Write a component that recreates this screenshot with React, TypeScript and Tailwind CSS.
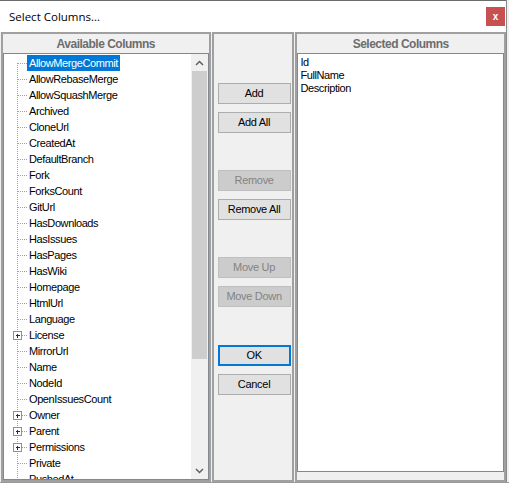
import React from "react"

const available = [
  { name: "AllowMergeCommit" },
  { name: "AllowRebaseMerge" },
  { name: "AllowSquashMerge" },
  { name: "Archived" },
  { name: "CloneUrl" },
  { name: "CreatedAt" },
  { name: "DefaultBranch" },
  { name: "Fork" },
  { name: "ForksCount" },
  { name: "GitUrl" },
  { name: "HasDownloads" },
  { name: "HasIssues" },
  { name: "HasPages" },
  { name: "HasWiki" },
  { name: "Homepage" },
  { name: "HtmlUrl" },
  { name: "Language" },
  { name: "License", expandable: true },
  { name: "MirrorUrl" },
  { name: "Name" },
  { name: "NodeId" },
  { name: "OpenIssuesCount" },
  { name: "Owner", expandable: true },
  { name: "Parent", expandable: true },
  { name: "Permissions", expandable: true },
  { name: "Private" },
  { name: "PushedAt" },
]

const selected = ["Id", "FullName", "Description"]

const font = { fontFamily: '"Liberation Sans", Arial, sans-serif' }

function TreeGutter({ first, expandable }: { first: boolean; expandable?: boolean }) {
  return (
    <svg width="23" height="16" className="shrink-0" shapeRendering="crispEdges">
      <line x1="13.5" y1={first ? 8 : 0} x2="13.5" y2="16" stroke="#a0a0a0" strokeDasharray="1 1" />
      <line x1="14" y1="8.5" x2="23" y2="8.5" stroke="#a0a0a0" strokeDasharray="1 1" />
      {expandable && (
        <>
          <rect x="9.5" y="4.5" width="8" height="8" fill="#fff" stroke="#919191" />
          <line x1="11.5" y1="8.5" x2="16" y2="8.5" stroke="#2b2b2b" />
          <line x1="13.5" y1="6.5" x2="13.5" y2="11" stroke="#2b2b2b" />
        </>
      )}
    </svg>
  )
}

function Btn({ label, disabled, primary, className = "" }: { label: string; disabled?: boolean; primary?: boolean; className?: string }) {
  const base = "w-[73px] h-[21px] flex items-center justify-center text-[11px] tracking-[-0.3px]"
  const look = disabled
    ? "bg-[#cccccc] border border-[#bfbfbf] text-[#838383]"
    : primary
      ? "bg-[#e1e1e1] border-2 border-[#0078d7] text-black"
      : "bg-[#e1e1e1] border border-[#adadad] text-black"
  return <div className={`${base} ${look} ${className}`}>{label}</div>
}

function Panel({ children, className = "" }: { children: React.ReactNode; className?: string }) {
  return (
    <div className={`h-[450px] border-2 border-[#a0a0a0] bg-[#f0f0f0] flex flex-col ${className}`}>
      {children}
    </div>
  )
}

function Header({ title }: { title: string }) {
  return (
    <div className="h-[19px] shrink-0 flex items-center justify-center text-[12px] font-bold text-[#6d6d6d] tracking-[-0.5px]">
      {title}
    </div>
  )
}

export default function App() {
  return (
    <div className="w-[509px] h-[483px] bg-[#9a9a9a] overflow-hidden relative" style={font}>
      <div className="flex h-[482px]">
        <div className="w-[506px] h-full flex flex-col border-t border-[#6b6b6b] bg-[#f0f0f0]">
          {/* title bar */}
          <div className="h-[31px] bg-white flex items-center justify-between pl-[9px] pr-[1px] shrink-0">
            <span className="text-[11.5px] text-black" style={{ fontFamily: '"Open Sans", "Liberation Sans", sans-serif' }}>
              Select Columns...
            </span>
            <div className="w-[19px] h-[19px] bg-[#c75050] flex items-center justify-center text-white text-[10px] font-bold">
              x
            </div>
          </div>

          <div className="flex gap-[1px] pl-[1px] bg-[#f0f0f0] flex-1">
            {/* available */}
            <Panel className="w-[210px]">
              <Header title="Available Columns" />
              <div className="flex-1 border border-[#828790] bg-white flex overflow-hidden">
                <div className="flex-1 pt-[1px] overflow-hidden">
                  {available.map((c, i) => (
                    <div key={c.name} className="h-[16px] flex items-center">
                      <TreeGutter first={i === 0} expandable={c.expandable} />
                      <span
                        className={`text-[11px] tracking-[-0.4px] leading-[16px] px-[2px] ${i === 0 ? "bg-[#0078d7] text-white" : "text-black"}`}
                      >
                        {c.name}
                      </span>
                    </div>
                  ))}
                </div>
                <div className="w-[17px] bg-[#f0f0f0] flex flex-col shrink-0">
                  <div className="h-[17px] flex items-center justify-center">
                    <svg width="9" height="6" viewBox="0 0 9 6">
                      <path d="M1 5 L4.5 1.5 L8 5" fill="none" stroke="#606060" strokeWidth="1.5" />
                    </svg>
                  </div>
                  <div className="h-[288px] mx-[1px] bg-[#cdcdcd]" />
                  <div className="flex-1" />
                  <div className="h-[17px] flex items-center justify-center">
                    <svg width="9" height="6" viewBox="0 0 9 6">
                      <path d="M1 1 L4.5 4.5 L8 1" fill="none" stroke="#606060" strokeWidth="1.5" />
                    </svg>
                  </div>
                </div>
              </div>
            </Panel>

            {/* buttons */}
            <Panel className="w-[83px] items-start pl-[4px]">
              <Btn label="Add" className="mt-[49px]" />
              <Btn label="Add All" className="mt-[8px]" />
              <Btn label="Remove" disabled className="mt-[37px]" />
              <Btn label="Remove All" className="mt-[8px]" />
              <Btn label="Move Up" disabled className="mt-[37px]" />
              <Btn label="Move Down" disabled className="mt-[8px]" />
              <Btn label="OK" primary className="mt-[38px]" />
              <Btn label="Cancel" className="mt-[8px]" />
            </Panel>

            {/* selected */}
            <Panel className="w-[211px]">
              <Header title="Selected Columns" />
              <div className="h-[419px] border border-[#828790] bg-white pl-[2px] pt-[2px]">
                {selected.map((s) => (
                  <div key={s} className="h-[13px] leading-[13px] text-[11px] tracking-[-0.4px] text-black">
                    {s}
                  </div>
                ))}
              </div>
            </Panel>
          </div>
        </div>
        <div className="flex-1 bg-[#f0f0f0] border-l border-[#8a8a8a]" />
      </div>
    </div>
  )
}
